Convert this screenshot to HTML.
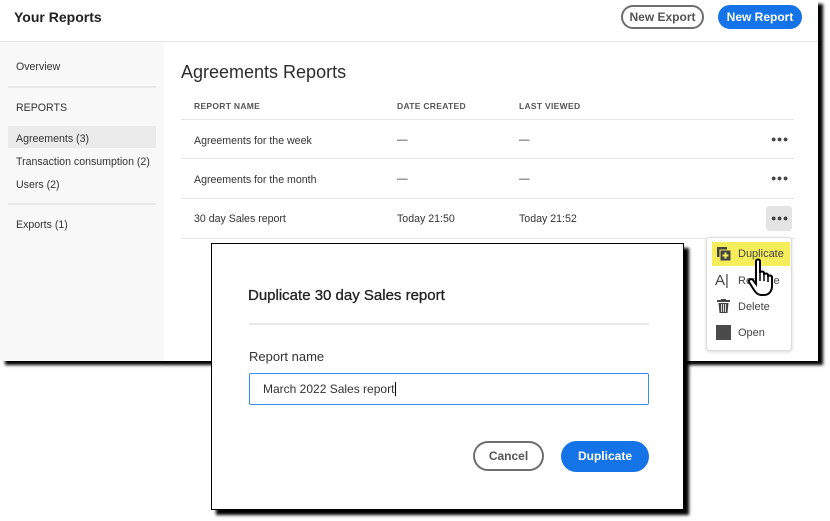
<!DOCTYPE html>
<html><head><meta charset="utf-8"><style>
*{box-sizing:border-box;margin:0;padding:0}
body{width:830px;height:521px;background:#fff;position:relative;overflow:hidden;font-family:"Liberation Sans",sans-serif;color:#2c2c2c}
.win{position:absolute;left:0;top:0;width:818px;height:361px;background:#fff;box-shadow:5px 4px 3px #000}
.hdr{position:absolute;left:0;top:0;width:818px;height:42px;border-bottom:1px solid #e6e6e6}
.hdr .t{position:absolute;left:14px;top:9px;font-size:14px;font-weight:bold;color:#222}
.btn{position:absolute;border-radius:14px;font-size:12px;font-weight:bold;text-align:center}
.side{position:absolute;left:0;top:42px;width:164px;height:319px;background:#f8f8f8}
.side div{position:absolute;font-size:10.6px;color:#333}
.hr{position:absolute;height:2px;background:#e8e8e8}
.main .r{position:absolute;left:181px;width:613px;height:1px;background:#e6e6e6}
.c{position:absolute;font-size:10.6px;color:#333}
.h{position:absolute;font-size:8.5px;font-weight:bold;color:#555;letter-spacing:.3px}
.dots{position:absolute;font-size:9px;font-weight:bold;color:#444;letter-spacing:0.5px}
.menu{position:absolute;left:706px;top:237px;width:86px;height:114px;background:#fff;border:1px solid #ddd;border-radius:3px;box-shadow:0 1px 3px rgba(0,0,0,.15)}
.menu div{position:absolute;left:31px;font-size:11px;color:#444}
.dlg{position:absolute;left:211px;top:243px;width:473px;height:267px;background:#fff;border:1px solid #000;box-shadow:5px 5px 3px #000}
</style></head><body>
<div class="win">
 <div class="hdr"><div class="t">Your Reports</div>
  <div class="btn" style="left:621px;top:5px;width:83px;height:24px;border:2px solid #6e6e6e;color:#555;line-height:20px">New Export</div>
  <div class="btn" style="left:718px;top:5px;width:84px;height:24px;background:#1473e6;color:#fff;line-height:24px">New Report</div>
 </div>
 <div class="side">
  <div style="left:16px;top:19px">Overview</div>
  <div class="hr" style="left:8px;top:44px;width:148px"></div>
  <div style="left:16px;top:60px">REPORTS</div>
  <div style="left:8px;top:84px;width:148px;height:22px;background:#ebebeb"></div>
  <div style="left:16px;top:91px">Agreements (3)</div>
  <div style="left:16px;top:114px">Transaction consumption (2)</div>
  <div style="left:16px;top:137px">Users (2)</div>
  <div class="hr" style="left:8px;top:161px;width:148px"></div>
  <div style="left:16px;top:177px">Exports (1)</div>
 </div>
 <div class="main">
  <div style="position:absolute;left:181px;top:62px;font-size:18px;color:#2c2c2c">Agreements Reports</div>
  <div class="h" style="left:194px;top:101px">REPORT NAME</div>
  <div class="h" style="left:397px;top:101px">DATE CREATED</div>
  <div class="h" style="left:519px;top:101px">LAST VIEWED</div>
  <div class="r" style="top:119px"></div>
  <div class="c" style="left:194px;top:135px">Agreements for the week</div>
  <div class="c" style="left:397px;top:134px">—</div><div class="c" style="left:519px;top:134px">—</div>
  <div class="dots" style="left:771px;top:134px">●●●</div>
  <div class="r" style="top:158px"></div>
  <div class="c" style="left:194px;top:174px">Agreements for the month</div>
  <div class="c" style="left:397px;top:173px">—</div><div class="c" style="left:519px;top:173px">—</div>
  <div class="dots" style="left:771px;top:173px">●●●</div>
  <div class="r" style="top:198px"></div>
  <div class="c" style="left:194px;top:213px">30 day Sales report</div>
  <div class="c" style="left:397px;top:213px">Today 21:50</div><div class="c" style="left:519px;top:213px">Today 21:52</div>
  <div style="position:absolute;left:766px;top:206px;width:26px;height:25px;background:#e4e4e4;border-radius:3px"></div>
  <div class="dots" style="left:771px;top:213px">●●●</div>
  <div class="r" style="top:238px"></div>
 </div>
 <div class="menu">
  <div style="left:5px;top:4px;width:78px;height:24px;background:#f5ee5a"></div>
  <svg style="position:absolute;left:10px;top:9px" width="14" height="14"><rect x="0" y="0" width="10" height="10" fill="#444"/><rect x="3" y="3" width="11" height="11" fill="#444" stroke="#f5ee5a"/><path d="M8.5 5.5v6M5.5 8.5h6" stroke="#f5ee5a" stroke-width="2"/></svg>
  <div style="top:10px">Duplicate</div>
  <div style="left:8px;top:34px;font-size:15px">A|</div>
  <div style="top:37px">Rename</div>
  <svg style="position:absolute;left:10px;top:61px" width="13" height="14"><rect x="0" y="1" width="13" height="2" fill="#444"/><rect x="4" y="0" width="5" height="2" fill="#444"/><path d="M1.5 4h10l-1 10h-8z" fill="#444"/><path d="M4.5 5v8M6.5 5v8M8.5 5v8" stroke="#fff" stroke-width=".8"/></svg>
  <div style="top:63px">Delete</div>
  <div style="left:9px;top:87px;width:15px;height:15px;background:#4b4b4b"></div>
  <div style="top:89px">Open</div>
 </div>
 <svg style="position:absolute;left:748px;top:258px" width="30" height="40" viewBox="0 0 30 40"><path d="M8 3c0-2 4-2 4 0v12c0-2 4-2 4 0v2c0-2 4-2 4 0v2c0-2 4-2 4 0v9c0 5-3 9-8 9h-3c-3 0-5-2-7-5l-5-8c-1-2 2-4 4-2l3 4z" fill="#fff" stroke="#000" stroke-width="2"/><path d="M12 15v8M16 17v6M20 19v5" stroke="#000" stroke-width="1.5"/></svg>
</div>
<div class="dlg">
 <div style="position:absolute;left:36px;top:43px;font-size:15px;color:#222;-webkit-text-stroke:0.3px #222">Duplicate 30 day Sales report</div>
 <div style="position:absolute;left:37px;top:79px;width:400px;height:2px;background:#e8e8e8"></div>
 <div style="position:absolute;left:37px;top:105px;font-size:13px;color:#333">Report name</div>
 <div style="position:absolute;left:37px;top:129px;width:400px;height:32px;border:1px solid #378ef0;border-radius:2px;font-size:12px;color:#333;padding:8px 0 0 13px">March 2022 Sales report<span style="border-left:1px solid #000;margin-left:1px"></span></div>
 <div class="btn" style="left:261px;top:197px;width:71px;height:30px;border:2px solid #6e6e6e;color:#555;line-height:26px;font-size:12px;border-radius:15px">Cancel</div>
 <div class="btn" style="left:349px;top:197px;width:88px;height:31px;background:#1473e6;color:#fff;line-height:31px;border-radius:16px">Duplicate</div>
</div>
</body></html>
